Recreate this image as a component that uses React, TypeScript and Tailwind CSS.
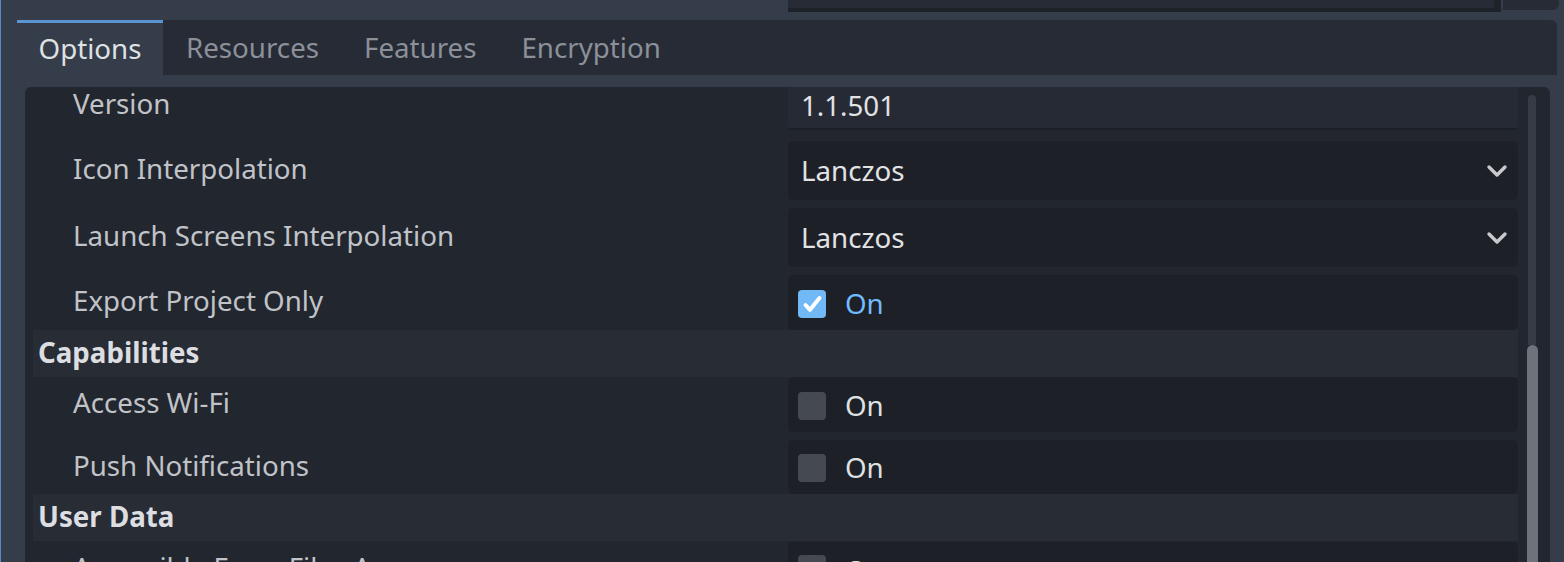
import React from "react";

const FONT = { fontFamily: '"Noto Sans", "Open Sans", sans-serif' };

function Chevron() {
  return (
    <svg width="22" height="14" viewBox="0 0 22 14" className="shrink-0">
      <path d="M3 3 L11 11 L19 3" fill="none" stroke="#c8cacd" strokeWidth="3.4" strokeLinecap="round" strokeLinejoin="round" />
    </svg>
  );
}

function CheckBox({ checked }: { checked: boolean }) {
  if (checked) {
    return (
      <div className="w-[28px] h-[28px] rounded-[4px] bg-[#70b8f6] flex items-center justify-center shrink-0">
        <svg width="28" height="28" viewBox="0 0 28 28">
          <path d="M7.5 15 L12 19.8 L21.5 8" fill="none" stroke="#ffffff" strokeWidth="4" strokeLinecap="round" strokeLinejoin="round" />
        </svg>
      </div>
    );
  }
  return <div className="w-[28px] h-[28px] rounded-[4px] bg-[#454952] shrink-0" />;
}

function Label({ text }: { text: string }) {
  return (
    <div className="w-[755px] shrink-0 pl-[40px] pb-[3px] flex items-center text-[27.7px] leading-none text-[#c0c3c8] whitespace-nowrap">
      {text}
    </div>
  );
}

function DropRow({ label, value }: { label: string; value: string }) {
  return (
    <div className="flex h-[59px] shrink-0">
      <Label text={label} />
      <div className="w-[730px] rounded-[5px] bg-[#1d2027] flex items-center justify-between pl-[13px] pr-[10px] pt-[1px]">
        <span className="text-[27.7px] leading-none text-[#e2e3e5]">{value}</span>
        <Chevron />
      </div>
    </div>
  );
}

function CheckRow({ label, checked, h = 55 }: { label: string; checked: boolean; h?: number }) {
  return (
    <div className="flex shrink-0" style={{ height: h }}>
      <Label text={label} />
      <div className="w-[730px] rounded-[5px] bg-[#1d2027] flex items-center pl-[10px] pt-[2px] gap-[19px]">
        <CheckBox checked={checked} />
        <span className={"text-[27.7px] leading-none " + (checked ? "text-[#70bbff]" : "text-[#dfe0e2]")}>On</span>
      </div>
    </div>
  );
}

function CheckRowTop({ label }: { label: string }) {
  return (
    <div className="flex shrink-0 h-[55px]">
      <div className="w-[755px] shrink-0 pl-[40px] pt-[12px] text-[27.7px] leading-none text-[#c0c3c8] whitespace-nowrap">
        {label}
      </div>
      <div className="w-[730px] rounded-[5px] bg-[#1d2027] flex items-start pl-[10px] pt-[13px] gap-[19px]">
        <CheckBox checked={false} />
        <span className="text-[27.7px] leading-none text-[#dfe0e2] pt-[2px]">On</span>
      </div>
    </div>
  );
}

function Header({ text }: { text: string }) {
  return (
    <div className="h-[47px] shrink-0 bg-[#282c35] flex items-center pl-[5px] pb-[1px] text-[27.7px] font-bold leading-none text-[#dcdee1]">
      {text}
    </div>
  );
}

export default function App() {
  return (
    <div className="w-[1564px] h-[562px] overflow-hidden bg-[#363d4a] border-l border-[#5689c8] flex flex-col" style={FONT}>
      {/* top strip */}
      <div className="h-[20px] shrink-0 flex pl-[787px]">
        <div className="w-[706px] h-[12px] flex flex-col">
          <div className="h-[8px] bg-[#262b36]" />
          <div className="h-[4px] bg-[#1e2229]" />
        </div>
        <div className="w-[7px] h-[12px] bg-[#1e2229]" />
        <div className="w-[2px]" />
        <div className="w-[56px] h-[10px] bg-[#262b35] rounded-br-[6px]" />
      </div>

      {/* tab bar */}
      <div className="ml-[16px] w-[1540px] h-[55px] shrink-0 flex bg-[#262b36] rounded-tr-[6px]">
        <div className="w-[146px] bg-[#363d4a] border-t-[3px] border-[#5b93d3] flex items-center justify-center pb-[1px] text-[27.7px] leading-none text-[#dfe1e4]">
          Options
        </div>
        <div className="flex items-center text-[27.7px] leading-none text-[#8b9099] pt-[1px]">
          <div className="pl-[23px] pr-[22px]">Resources</div>
          <div className="pl-[23px] pr-[22px]">Features</div>
          <div className="pl-[23px] pr-[22px]">Encryption</div>
        </div>
      </div>

      {/* body */}
      <div className="flex-1 flex pt-[12px] pl-[24px] pr-[14px] min-h-0">
        <div className="flex-1 bg-[#22262e] rounded-t-[6px] flex pl-[8px] overflow-hidden">
          <div className="w-[1485px] flex flex-col shrink-0">
            {/* Version */}
            <div className="flex h-[43px] shrink-0">
              <div className="w-[755px] shrink-0 pl-[40px] pt-[1px] text-[27.7px] leading-[1.1] text-[#c0c3c8]">Version</div>
              <div className="w-[730px] rounded-b-[4px] bg-[#262a34] border-b-[2px] border-[#1c1f25] flex items-start pl-[13px] pt-[5px] text-[27.7px] leading-none text-[#e2e3e5]">
                1.1.501
              </div>
            </div>
            <div className="h-[11px] shrink-0" />
            <div className="flex flex-col gap-[8px] shrink-0">
              <DropRow label="Icon Interpolation" value="Lanczos" />
              <DropRow label="Launch Screens Interpolation" value="Lanczos" />
              <CheckRow label="Export Project Only" checked={true} />
            </div>
            <Header text="Capabilities" />
            <div className="flex flex-col gap-[8px] shrink-0">
              <CheckRow label="Access Wi-Fi" checked={false} />
              <CheckRow label="Push Notifications" checked={false} h={54} />
            </div>
            <Header text="User Data" />
            <div className="h-[1px] shrink-0" />
            <CheckRowTop label="Accessible From Files App" />
          </div>
          {/* scrollbar */}
          <div className="w-[32px] shrink-0 flex justify-center pt-[8px] pr-[4px]">
            <div className="w-[11px] flex flex-col items-center">
              <div className="w-[8px] h-[250px] shrink-0 bg-[#363b45] rounded-t-[4px]" />
              <div className="w-[11px] flex-1 bg-[#6d727b] rounded-t-[6px]" />
            </div>
          </div>
        </div>
      </div>
    </div>
  );
}
